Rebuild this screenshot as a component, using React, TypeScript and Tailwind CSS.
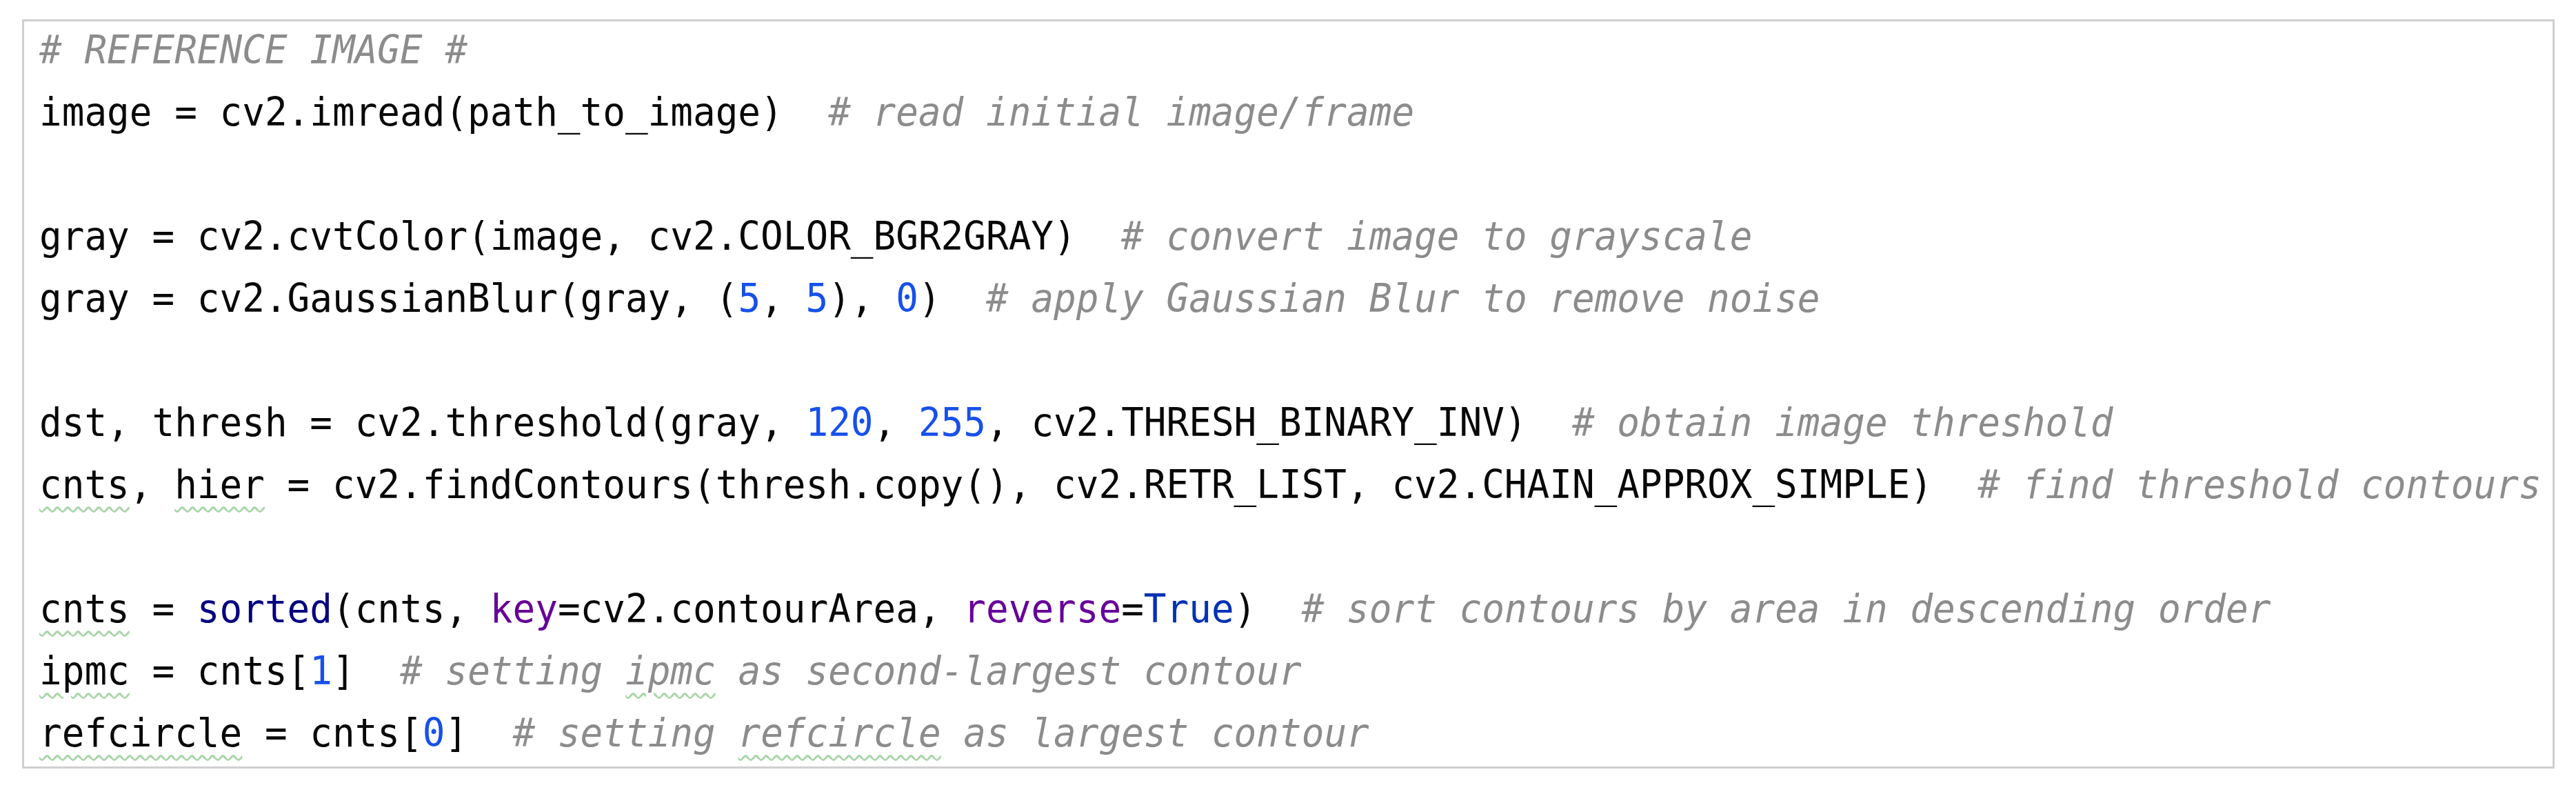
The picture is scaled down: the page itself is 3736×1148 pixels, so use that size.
const cm = "italic text-[#8c8c8c]";
const num = "text-[#1750eb]";
const builtin = "text-[#000080]";
const kwarg = "text-[#660099]";
const keyword = "text-[#0033b3]";
const typo = "underline decoration-wavy decoration-[#a9d5a9] decoration-[3px] underline-offset-[11px]";

type Tok = [string, string?];

const lines: Tok[][] = [
  [["# REFERENCE IMAGE #", cm]],
  [["image = cv2.imread(path_to_image)  "], ["# read initial image/frame", cm]],
  [],
  [["gray = cv2.cvtColor(image, cv2.COLOR_BGR2GRAY)  "], ["# convert image to grayscale", cm]],
  [
    ["gray = cv2.GaussianBlur(gray, ("],
    ["5", num],
    [", "],
    ["5", num],
    ["), "],
    ["0", num],
    [")  "],
    ["# apply Gaussian Blur to remove noise", cm],
  ],
  [],
  [
    ["dst, thresh = cv2.threshold(gray, "],
    ["120", num],
    [", "],
    ["255", num],
    [", cv2.THRESH_BINARY_INV)  "],
    ["# obtain image threshold", cm],
  ],
  [
    ["cnts", typo],
    [", "],
    ["hier", typo],
    [" = cv2.findContours(thresh.copy(), cv2.RETR_LIST, cv2.CHAIN_APPROX_SIMPLE)  "],
    ["# find threshold contours", cm],
  ],
  [],
  [
    ["cnts", typo],
    [" = "],
    ["sorted", builtin],
    ["(cnts, "],
    ["key", kwarg],
    ["=cv2.contourArea, "],
    ["reverse", kwarg],
    ["="],
    ["True", keyword],
    [")  "],
    ["# sort contours by area in descending order", cm],
  ],
  [
    ["ipmc", typo],
    [" = cnts["],
    ["1", num],
    ["]  "],
    ["# setting ", cm],
    ["ipmc", `${cm} ${typo}`],
    [" as second-largest contour", cm],
  ],
  [
    ["refcircle", typo],
    [" = cnts["],
    ["0", num],
    ["]  "],
    ["# setting ", cm],
    ["refcircle", `${cm} ${typo}`],
    [" as largest contour", cm],
  ],
];

export default function App() {
  return (
    <div className="min-h-screen bg-white pl-[32px] pt-[28px]">
      <div className="w-[3673px] h-[1086px] border-[3px] border-[#cfcfcf] bg-white pl-[22px] overflow-hidden">
        <div className="font-['DejaVu_Sans_Mono',monospace] text-[54.3px] leading-[90px] text-[#080808] -mt-[2px]">
          {lines.map((line, i) => (
            <div key={i} className="h-[90px] whitespace-pre scale-y-[1.06] origin-[left_68%]">
              {line.map(([text, cls], j) => (
                <span key={j} className={cls}>
                  {text}
                </span>
              ))}
            </div>
          ))}
        </div>
      </div>
    </div>
  );
}
